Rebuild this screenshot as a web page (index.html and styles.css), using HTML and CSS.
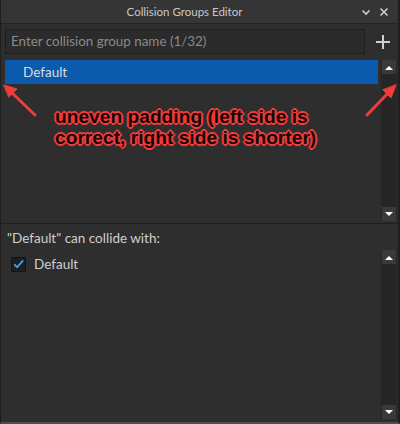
FILE: index.html
```html
<!DOCTYPE html>
<html>
<head>
<meta charset="utf-8">
<link rel="stylesheet" href="styles.css">
</head>
<body>
<div class="window">
  <div class="titlebar">
    <span class="title">Collision Groups Editor</span>
    <div class="title-icons">
      <svg width="12" height="12" viewBox="0 0 12 12"><path d="M2.5 4.5 L6 8 L9.5 4.5" fill="none" stroke="#d0d0d0" stroke-width="1.6"/></svg>
      <svg width="12" height="12" viewBox="0 0 12 12"><path d="M2.5 2.5 L9.5 9.5 M9.5 2.5 L2.5 9.5" fill="none" stroke="#d0d0d0" stroke-width="1.5"/></svg>
    </div>
  </div>
  <div class="input-row">
    <div class="input">Enter collision group name (1/32)</div>
    <div class="plus">
      <svg width="16" height="16" viewBox="0 0 16 16"><path d="M8 1 V15 M1 8 H15" stroke="#cfcfcf" stroke-width="2"/></svg>
    </div>
  </div>
  <div class="list-area">
    <div class="list">
      <div class="row selected">Default</div>
    </div>
    <div class="scrollbar">
      <div class="sb-btn"><svg width="8" height="5" viewBox="0 0 8 5"><path d="M0 5 L4 1 L8 5 Z" fill="#fff"/></svg></div>
      <div class="sb-track"></div>
      <div class="sb-btn"><svg width="8" height="5" viewBox="0 0 8 5"><path d="M0 0 L8 0 L4 4 Z" fill="#fff"/></svg></div>
    </div>
  </div>
  <div class="separator"></div>
  <div class="collide-label">"Default" can collide with:</div>
  <div class="collide-area">
    <div class="collide-list">
      <div class="check-row">
        <span class="checkbox"><svg width="14" height="14" viewBox="0 0 14 14"><path d="M2.5 7.5 L5.5 10.5 L12 3" fill="none" stroke="#3ba3f0" stroke-width="2"/></svg></span>
        <span>Default</span>
      </div>
    </div>
    <div class="scrollbar scrollbar2">
      <div class="sb-btn"><svg width="8" height="5" viewBox="0 0 8 5"><path d="M0 5 L4 1 L8 5 Z" fill="#fff"/></svg></div>
      <div class="sb-track"></div>
      <div class="sb-btn"><svg width="8" height="5" viewBox="0 0 8 5"><path d="M0 0 L8 0 L4 4 Z" fill="#fff"/></svg></div>
    </div>
  </div>

  <svg class="arrows" width="400" height="424" viewBox="0 0 400 424">
    <g stroke="#f03c3c" stroke-width="3" fill="#f03c3c" stroke-linecap="round">
      <line x1="35" y1="115" x2="10" y2="91"/>
      <path d="M4 85 L17 89 L9 97 Z" stroke-width="1"/>
      <line x1="367" y1="115" x2="390" y2="91"/>
      <path d="M396 85 L391 98 L383 90 Z" stroke-width="1"/>
    </g>
  </svg>
  <div class="note">uneven padding (left side is<br>correct, right side is shorter)</div>
</div>
</body>
</html>
```

FILE: styles.css
```css
html, body {
  margin: 0;
  padding: 0;
  background: #2e2e2e;
}
body {
  font-family: Lato, "Open Sans", sans-serif;
}
.window {
  position: relative;
  width: 400px;
  height: 424px;
  box-sizing: border-box;
  background: #2e2e2e;
  border-left: 1px solid #1e1e1e;
  border-right: 2px solid #1e1e1e;
  border-bottom: 2px solid #4a4e55;
  display: flex;
  flex-direction: column;
  overflow: hidden;
}
.titlebar {
  height: 23px;
  flex: none;
  background: #353535;
  border-bottom: 1px solid #232323;
  display: flex;
  align-items: center;
  justify-content: center;
  padding-right: 30px;
  position: relative;
}
.title {
  color: #c8c8c8;
  font-size: 11.5px;
}
.title-icons {
  position: absolute;
  right: 8px;
  top: 6px;
  display: flex;
  gap: 6px;
}
.input-row {
  display: flex;
  align-items: center;
  padding: 4px 0 0 4px;
  height: 27px;
  flex: none;
}
.input {
  width: 360px;
  height: 25px;
  box-sizing: border-box;
  border: 1px solid #1f1f1f;
  background: #2b2b2b;
  color: #8a8a8a;
  font-size: 13.4px;
  padding-left: 5px;
  line-height: 23px;
}
.plus {
  margin-left: 10px;
  display: flex;
  align-items: center;
  height: 25px;
}
.list-area {
  display: flex;
  margin-top: 4px;
  height: 162px;
  flex: none;
}
.list {
  flex: 1;
  padding: 1px 0 0 4px;
}
.row {
  height: 24px;
  line-height: 24px;
  font-size: 13.5px;
  color: #dcdcdc;
  padding-left: 18px;
}
.row.selected {
  background: #0b5aad;
  width: 355px;
}
.scrollbar {
  width: 16px;
  margin-right: 1px;
  margin-top: 1px;
  background: #262626;
  display: flex;
  flex-direction: column;
  align-items: center;
}
.sb-btn {
  width: 14px;
  height: 14px;
  background: #3a3a3a;
  display: flex;
  align-items: center;
  justify-content: center;
}
.sb-track {
  flex: 1;
}
.separator {
  height: 1px;
  background: #1f1f1f;
  margin-top: 2px;
  flex: none;
}
.collide-label {
  color: #cfcfcf;
  font-size: 13.5px;
  padding: 6px 0 0 6px;
  height: 19px;
  flex: none;
}
.collide-area {
  display: flex;
  flex: 1;
  margin-top: 0;
  padding-bottom: 3px;
}
.collide-list {
  flex: 1;
  padding: 7px 0 0 10px;
}
.check-row {
  display: flex;
  align-items: center;
  gap: 8px;
  color: #cfcfcf;
  font-size: 13.5px;
}
.checkbox {
  width: 15px;
  height: 15px;
  box-sizing: border-box;
  border: 1px solid #151515;
  background: #1e1e1e;
  display: flex;
  align-items: center;
  justify-content: center;
}
.scrollbar2 {
  margin-top: 1px;
}
.arrows {
  position: absolute;
  left: -1px;
  top: 0;
  pointer-events: none;
}
.note {
  position: absolute;
  left: 54px;
  top: 106px;
  font-family: "Liberation Sans", Arial, sans-serif;
  font-weight: bold;
  font-size: 19.2px;
  line-height: 21px;
  color: #1a0505;
  text-shadow:
    -1px -1px 0 #f03c3c, 1px -1px 0 #f03c3c, -1px 1px 0 #f03c3c, 1px 1px 0 #f03c3c,
    0 -2px 0 #f03c3c, 0 2px 0 #f03c3c, -2px 0 0 #f03c3c, 2px 0 0 #f03c3c,
    0 0 3px #f03c3c;
}
```
